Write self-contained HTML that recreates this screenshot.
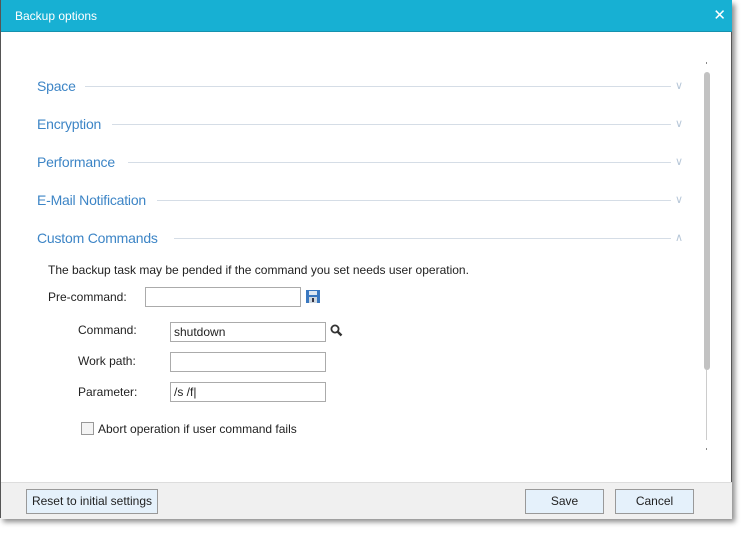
<!DOCTYPE html>
<html><head><style>
body{margin:0;width:745px;height:535px;background:#fff;position:relative;overflow:hidden;font-family:"Liberation Sans","DejaVu Sans",sans-serif;font-size:12px;color:#222}
.win{position:absolute;left:0;top:0;width:732px;height:518px;border:1px solid #555;border-top:none;box-sizing:border-box;box-shadow:3px 4px 5px rgba(0,0,0,.45);background:#fff}
.title{position:absolute;left:0;top:0;width:731px;height:31px;background:#17b0d3;border-bottom:1px solid #1592ae;color:#fff;font-size:12px}
.tt{position:absolute;left:14px;top:9px}
.x{position:absolute;right:6px;top:6px;font-size:15px;font-weight:bold}
.h{position:absolute;left:36px;font-size:14px;color:#3d85c6;letter-spacing:-0.2px}
.line{position:absolute;height:1px;background:#d5dde6;right:60px}
.chev{position:absolute;left:674px;color:#b7c7d8;font-size:11px}
.t{position:absolute}
.in{position:absolute;border:1px solid #ababab;height:18px;box-sizing:border-box;background:#fff;font-size:12px;padding:2px 3px}
.foot{position:absolute;left:0;top:482px;width:731px;height:36px;background:#f0f0f0;border-top:1px solid #ddd}
.btn{position:absolute;top:6px;height:25px;border:1px solid #999;background:#e5f1fb;box-sizing:border-box;text-align:center;line-height:23px;font-size:12px}
</style></head><body>
<div class="win">
<div class="title"><span class="tt">Backup options</span><span class="x">✕</span></div>
<div style="position:absolute;left:703px;top:72px;width:6px;height:298px;background:#c2c2c2;border-radius:3px"></div>
<div style="position:absolute;left:705px;top:370px;width:1px;height:70px;background:#ccc"></div>
<div style="position:absolute;left:705px;top:62px;width:1px;height:2px;background:#888"></div>
<div style="position:absolute;left:705px;top:448px;width:1px;height:2px;background:#888"></div>

<div class="h" style="top:78px">Space</div><div class="line" style="left:84px;top:86px"></div><div class="chev" style="top:79px">∨</div>
<div class="h" style="top:116px">Encryption</div><div class="line" style="left:111px;top:124px"></div><div class="chev" style="top:117px">∨</div>
<div class="h" style="top:154px">Performance</div><div class="line" style="left:127px;top:162px"></div><div class="chev" style="top:155px">∨</div>
<div class="h" style="top:192px">E-Mail Notification</div><div class="line" style="left:156px;top:200px"></div><div class="chev" style="top:193px">∨</div>
<div class="h" style="top:230px">Custom Commands</div><div class="line" style="left:173px;top:238px"></div><div class="chev" style="top:231px">∧</div>

<div class="t" style="left:47px;top:263px">The backup task may be pended if the command you set needs user operation.</div>
<div class="t" style="left:47px;top:290px">Pre-command:</div>
<div class="in" style="left:144px;top:287px;width:156px;height:20px"></div>
<svg style="position:absolute;left:305px;top:290px" width="14" height="13"><rect x="0" y="0" width="14" height="13" fill="#3a78c0"/><rect x="3" y="1" width="8" height="4" fill="#dfe8f2"/><rect x="3" y="7" width="8" height="6" fill="#cfd8e0"/><rect x="6" y="8" width="2" height="4" fill="#334"/></svg>
<div class="t" style="left:77px;top:323px">Command:</div>
<div class="in" style="left:169px;top:322px;width:156px;height:20px">shutdown</div>
<svg style="position:absolute;left:329px;top:324px" width="13" height="13"><circle cx="5" cy="5" r="3.6" fill="none" stroke="#333" stroke-width="1.8"/><line x1="7.6" y1="7.6" x2="11.5" y2="11.5" stroke="#333" stroke-width="2.4"/></svg>
<div class="t" style="left:77px;top:354px">Work path:</div>
<div class="in" style="left:169px;top:352px;width:156px;height:20px"></div>
<div class="t" style="left:77px;top:385px">Parameter:</div>
<div class="in" style="left:169px;top:382px;width:156px;height:20px">/s /f|</div>
<div style="position:absolute;left:80px;top:422px;width:11px;height:11px;border:1px solid #999;background:#f4f4f4"></div>
<div class="t" style="left:97px;top:422px">Abort operation if user command fails</div>

<div class="foot">
<div class="btn" style="left:25px;width:132px">Reset to initial settings</div>
<div class="btn" style="left:524px;width:79px">Save</div>
<div class="btn" style="left:614px;width:79px">Cancel</div>
</div>
</div>
</body></html>
